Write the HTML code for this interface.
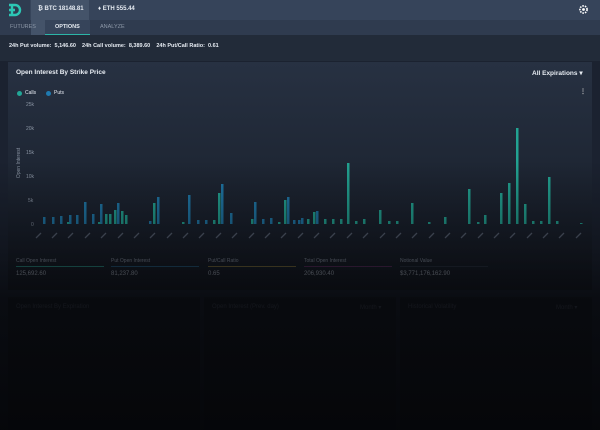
<!DOCTYPE html>
<html><head><style>
*{margin:0;padding:0;box-sizing:border-box}
body{width:600px;height:430px;overflow:hidden;background:#1b2230;font-family:"Liberation Sans",sans-serif;position:relative;color:#e6ebf2}
.nav{position:absolute;left:0;top:0;width:600px;height:20px;background:#36445a}
.logo{position:absolute;left:0;top:0;width:30px;height:20px;background:#2f3c50}
.btc{position:absolute;left:31px;top:0;width:58px;height:35px;background:#445369}
.t{position:absolute;font-size:6px;font-weight:bold;white-space:nowrap}
.tabs{position:absolute;left:0;top:20px;width:600px;height:15px;background:#2f3b4f}
.stats{position:absolute;left:0;top:35px;width:600px;height:26px;background:#222b39}
.panel{position:absolute;left:8px;top:62px;width:584px;height:228px;background:linear-gradient(#273142,#1a212d 70%,#141922)}
.bp{position:absolute;top:297px;height:133px;background:#151a22;width:192px}
.ov{position:absolute;left:0;top:0;width:600px;height:430px;background:linear-gradient(rgba(5,6,9,0) 0,rgba(5,6,9,0) 160px,rgba(5,6,9,.45) 250px,rgba(5,6,9,.78) 300px,rgba(4,5,8,.94) 430px)}
.lab{position:absolute;font-size:5px;color:#8a94a3}
</style></head><body>
<div class="nav"></div>
<div class="logo"><svg width="30" height="20" viewBox="0 0 30 20"><path d="M9 5h6a5 5 0 0 1 0 10h-6M12 5v10M9 10h6" stroke="#2cc7b5" stroke-width="2.4" fill="none"/></svg></div>
<div class="tabs"></div>
<div class="btc"></div>
<div class="t" style="left:38px;top:6px">₿ BTC 18148.81</div>
<div class="t" style="left:98px;top:6px">♦ ETH 555.44</div>
<svg style="position:absolute;left:578px;top:4px" width="11" height="11" viewBox="0 0 11 11"><circle cx="5.5" cy="5.5" r="3.6" fill="none" stroke="#fff" stroke-width="1.6" stroke-dasharray="1.6 1"/><circle cx="5.5" cy="5.5" r="1.4" fill="#fff"/></svg>
<div class="t" style="left:10px;top:24px;color:#8d98a8;font-weight:normal;font-size:5.5px">FUTURES</div>
<div style="position:absolute;left:45px;top:20px;width:45px;height:15px;background:#36445a;border-bottom:1px solid #2cb5a8"></div>
<div class="t" style="left:55px;top:24px;font-size:5.5px">OPTIONS</div>
<div class="t" style="left:100px;top:24px;color:#8d98a8;font-weight:normal;font-size:5.5px">ANALYZE</div>
<div class="stats"></div>
<div class="t" style="left:9px;top:43px;font-size:5.5px">24h Put volume: &nbsp;5,146.60 &nbsp;&nbsp; 24h Call volume: &nbsp;8,389.60 &nbsp;&nbsp; 24h Put/Call Ratio: &nbsp;0.61</div>
<div class="panel"></div>
<div class="t" style="left:16px;top:69px;font-size:6.5px;color:#e8edf3">Open Interest By Strike Price</div>
<div class="t" style="left:532px;top:69px;font-size:6.5px;color:#e8edf3">All Expirations ▾</div>
<div class="t" style="left:580px;top:88px;color:#ccc">⋮</div>
<div style="position:absolute;left:17px;top:91px;width:5px;height:5px;border-radius:50%;background:#22a797"></div>
<div class="t" style="left:25px;top:90px;font-weight:normal;font-size:5px">Calls</div>
<div style="position:absolute;left:46px;top:91px;width:5px;height:5px;border-radius:50%;background:#1f7ab0"></div>
<div class="t" style="left:54px;top:90px;font-weight:normal;font-size:5px">Puts</div>
<div class="lab" style="left:26px;top:102px">25k</div>
<div class="lab" style="left:26px;top:126px">20k</div>
<div class="lab" style="left:26px;top:150px">15k</div>
<div class="lab" style="left:26px;top:174px">10k</div>
<div class="lab" style="left:28px;top:198px">5k</div>
<div class="lab" style="left:31px;top:222px">0</div>
<div class="lab" style="left:4px;top:160px;transform:rotate(-90deg)">Open Interest</div>
<svg style="position:absolute;left:0;top:0" width="600" height="250">
<g fill="#1f78a8">
<rect x="43" y="217" width="2.5" height="7"/><rect x="52" y="217" width="2.5" height="7"/><rect x="60" y="216" width="2.5" height="8"/><rect x="69" y="215" width="2.5" height="9"/><rect x="76" y="215" width="2.5" height="9"/><rect x="84" y="202" width="2.5" height="22"/><rect x="92" y="214" width="2.5" height="10"/><rect x="100" y="204" width="2.5" height="20"/><rect x="117" y="203" width="2.5" height="21"/><rect x="149" y="221" width="2.5" height="3"/><rect x="157" y="197" width="2.5" height="27"/><rect x="188" y="195" width="2.5" height="29"/><rect x="197" y="220" width="2.5" height="4"/><rect x="205" y="220" width="2.5" height="4"/><rect x="221" y="184" width="2.5" height="40"/><rect x="230" y="213" width="2.5" height="11"/><rect x="254" y="202" width="2.5" height="22"/><rect x="262" y="219" width="2.5" height="5"/><rect x="270" y="218" width="2.5" height="6"/><rect x="287" y="197" width="2.5" height="27"/><rect x="293" y="220" width="2.5" height="4"/><rect x="298" y="220" width="2.5" height="4"/><rect x="301" y="218" width="2.5" height="6"/><rect x="316" y="211" width="2.5" height="13"/></g>
<g fill="#22a392">
<rect x="67" y="222" width="2.5" height="2"/><rect x="98" y="222" width="2.5" height="2"/><rect x="105" y="214" width="2.5" height="10"/><rect x="109" y="214" width="2.5" height="10"/><rect x="114" y="210" width="2.5" height="14"/><rect x="121" y="211" width="2.5" height="13"/><rect x="125" y="215" width="2.5" height="9"/><rect x="153" y="203" width="2.5" height="21"/><rect x="182" y="222" width="2.5" height="2"/><rect x="213" y="220" width="2.5" height="4"/><rect x="218" y="193" width="2.5" height="31"/><rect x="251" y="219" width="2.5" height="5"/><rect x="278" y="222" width="2.5" height="2"/><rect x="284" y="200" width="2.5" height="24"/><rect x="307" y="219" width="2.5" height="5"/><rect x="313" y="212" width="2.5" height="12"/><rect x="324" y="219" width="2.5" height="5"/><rect x="332" y="219" width="2.5" height="5"/><rect x="340" y="219" width="2.5" height="5"/><rect x="347" y="163" width="2.5" height="61"/><rect x="355" y="221" width="2.5" height="3"/><rect x="363" y="219" width="2.5" height="5"/><rect x="379" y="210" width="2.5" height="14"/><rect x="388" y="221" width="2.5" height="3"/><rect x="396" y="221" width="2.5" height="3"/><rect x="411" y="203" width="2.5" height="21"/><rect x="428" y="222" width="2.5" height="2"/><rect x="444" y="217" width="2.5" height="7"/><rect x="468" y="189" width="2.5" height="35"/><rect x="477" y="222" width="2.5" height="2"/><rect x="484" y="215" width="2.5" height="9"/><rect x="500" y="193" width="2.5" height="31"/><rect x="508" y="183" width="2.5" height="41"/><rect x="516" y="128" width="2.5" height="96"/><rect x="524" y="204" width="2.5" height="20"/><rect x="532" y="221" width="2.5" height="3"/><rect x="540" y="221" width="2.5" height="3"/><rect x="548" y="177" width="2.5" height="47"/><rect x="556" y="221" width="2.5" height="3"/><rect x="580" y="223" width="2.5" height="1"/></g>
<g stroke="#5a6475" stroke-width="1.3">
<path d="M36 238l5-5M52 238l5-5M68 238l5-5M85 238l5-5M101 238l5-5M118 238l5-5M134 238l5-5M150 238l5-5M167 238l5-5M183 238l5-5M199 238l5-5M216 238l5-5M232 238l5-5M249 238l5-5M265 238l5-5M281 238l5-5M298 238l5-5M314 238l5-5M330 238l5-5M347 238l5-5M363 238l5-5M380 238l5-5M396 238l5-5M412 238l5-5M429 238l5-5M445 238l5-5M461 238l5-5M478 238l5-5M494 238l5-5M510 238l5-5M527 238l5-5M543 238l5-5M559 238l5-5M576 238l5-5"/></g>
</svg>
<div style="position:absolute;left:16px;top:266px;width:88px;height:1px;background:#2a8a80"></div>
<div style="position:absolute;left:111px;top:266px;width:88px;height:1px;background:#25587a"></div>
<div style="position:absolute;left:208px;top:266px;width:88px;height:1px;background:#7a6a3a"></div>
<div style="position:absolute;left:304px;top:266px;width:88px;height:1px;background:#5a2c5c"></div>
<div style="position:absolute;left:400px;top:266px;width:88px;height:1px;background:#2a3140"></div>
<div class="lab" style="left:16px;top:258px">Call Open Interest</div>
<div class="lab" style="left:111px;top:258px">Put Open Interest</div>
<div class="lab" style="left:208px;top:258px">Put/Call Ratio</div>
<div class="lab" style="left:304px;top:258px">Total Open Interest</div>
<div class="lab" style="left:400px;top:258px">Notional Value</div>
<div class="t" style="left:16px;top:271px;font-weight:normal;color:#aab2bf">125,692.60</div>
<div class="t" style="left:111px;top:271px;font-weight:normal;color:#aab2bf">81,237.80</div>
<div class="t" style="left:208px;top:271px;font-weight:normal;color:#aab2bf">0.65</div>
<div class="t" style="left:304px;top:271px;font-weight:normal;color:#aab2bf">206,930.40</div>
<div class="t" style="left:400px;top:271px;font-weight:normal;color:#aab2bf">$3,771,176,162.90</div>
<div class="bp" style="left:8px"></div><div class="bp" style="left:204px"></div><div class="bp" style="left:400px"></div>
<div class="t" style="left:16px;top:304px;color:#4a5262;font-weight:normal">Open Interest By Expiration</div>
<div class="t" style="left:212px;top:304px;color:#4a5262;font-weight:normal">Open Interest (Prev. day)</div>
<div class="t" style="left:360px;top:304px;color:#4a5262;font-weight:normal">Month ▾</div>
<div class="t" style="left:408px;top:304px;color:#4a5262;font-weight:normal">Historical Volatility</div>
<div class="t" style="left:556px;top:304px;color:#4a5262;font-weight:normal">Month ▾</div>
<div class="ov"></div>
</body></html>
